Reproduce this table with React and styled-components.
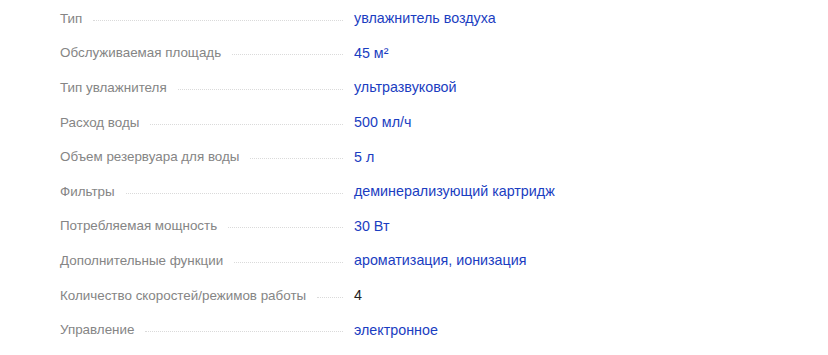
import React from 'react'
import styled, { createGlobalStyle } from 'styled-components';

const Global = createGlobalStyle`
  body {
    margin: 0;
    background: #fff;
    font-family: "Liberation Sans", Arial, sans-serif;
  }
`

const specs = [
  { name: 'Тип', value: 'увлажнитель воздуха', link: true },
  { name: 'Обслуживаемая площадь', value: '45 м²', link: true },
  { name: 'Тип увлажнителя', value: 'ультразвуковой', link: true },
  { name: 'Расход воды', value: '500 мл/ч', link: true },
  { name: 'Объем резервуара для воды', value: '5 л', link: true },
  { name: 'Фильтры', value: 'деминерализующий картридж', link: true },
  { name: 'Потребляемая мощность', value: '30 Вт', link: true },
  { name: 'Дополнительные функции', value: 'ароматизация, ионизация', link: true },
  { name: 'Количество скоростей/режимов работы', value: '4', link: false },
  { name: 'Управление', value: 'электронное', link: true },
];

function App() {
  return (
    <>
      <Global />
      <SpecList>
        {specs.map((s) => (
          <Row key={s.name}>
            <Term>
              <TermText>{s.name}</TermText>
              <Dots />
            </Term>
            <Value $link={s.link}>{s.value}</Value>
          </Row>
        ))}
      </SpecList>
    </>
  );
}

const SpecList = styled.dl`
  margin: 0;
  padding: 1px 0 0 60px;
`

const Row = styled.div`
  display: flex;
  align-items: center;
  height: 34.6px;
`

const Term = styled.dt`
  display: flex;
  align-items: baseline;
  width: 283px;
  margin-right: 11px;
  font-size: 13.4px;
  color: #858585;
`

const TermText = styled.span`
  white-space: nowrap;
  margin-right: 11px;
`

const Dots = styled.span`
  flex: 1;
  border-bottom: 1px dotted #dadada;
  position: relative;
  top: -2px;
`

const Value = styled.dd`
  margin: 0;
  font-size: 14.3px;
  color: ${(p) => (p.$link ? '#1a3dc1' : '#222')};
`

export default App;
